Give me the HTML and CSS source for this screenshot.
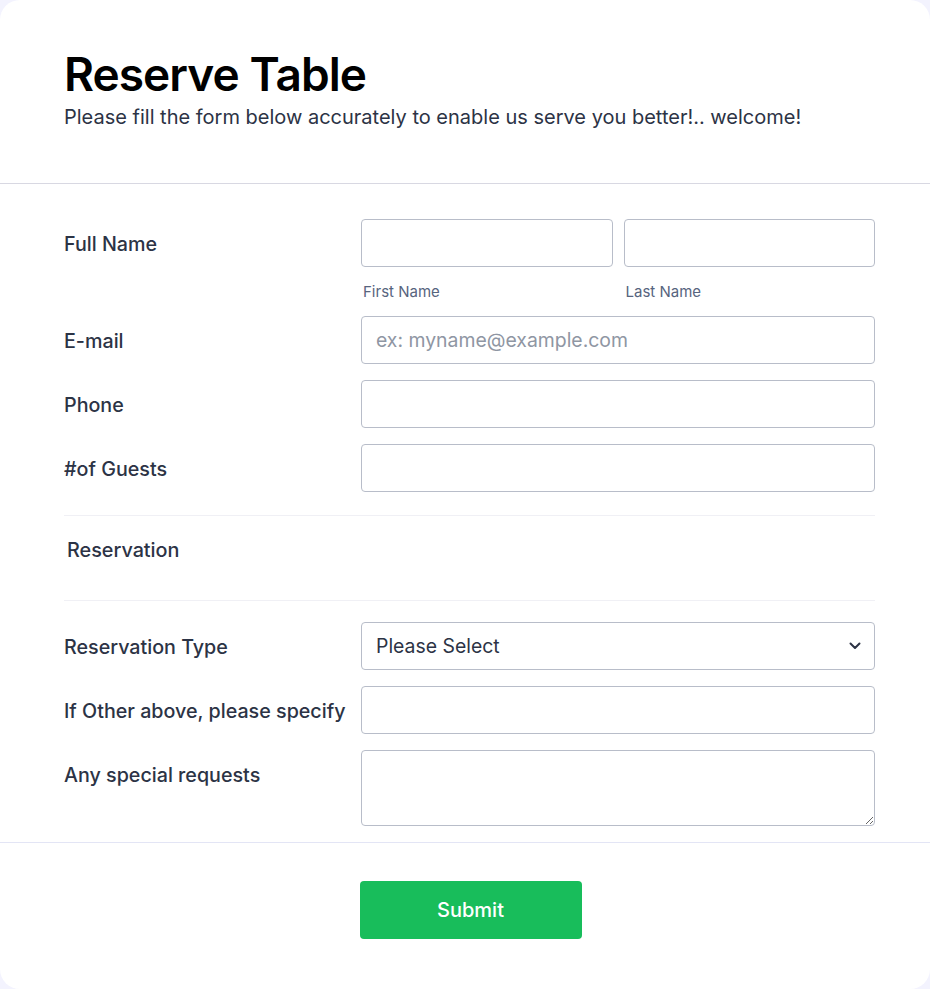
FILE: index.html
```html
<!DOCTYPE html>
<html lang="en">
<head>
<meta charset="utf-8">
<title>Reserve Table</title>
<link rel="stylesheet" href="styles.css">
</head>
<body>
<main class="card">
  <header class="header">
    <h1 class="title">Reserve Table</h1>
    <p class="subtitle">Please fill the form below accurately to enable us serve you better!.. welcome!</p>
  </header>
  <form class="form">
    <div class="row">
      <label class="label">Full Name</label>
      <div class="field">
        <div class="pair">
          <div class="sub">
            <input class="input" type="text">
            <span class="sublabel">First Name</span>
          </div>
          <div class="sub">
            <input class="input" type="text">
            <span class="sublabel">Last Name</span>
          </div>
        </div>
      </div>
    </div>
    <div class="row">
      <label class="label">E-mail</label>
      <div class="field"><input class="input" type="text" placeholder="ex: myname@example.com"></div>
    </div>
    <div class="row">
      <label class="label">Phone</label>
      <div class="field"><input class="input" type="text"></div>
    </div>
    <div class="row">
      <label class="label">#of Guests</label>
      <div class="field"><input class="input" type="text"></div>
    </div>
    <div class="section">
      <h2 class="section-title">Reservation</h2>
    </div>
    <div class="row">
      <label class="label">Reservation Type</label>
      <div class="field">
        <div class="select">
          <span class="select-text">Please Select</span>
          <svg class="chevron" width="12" height="8" viewBox="0 0 12 8"><path d="M1.5 1.5 L6 6 L10.5 1.5" fill="none" stroke="#2c3345" stroke-width="2" stroke-linecap="round" stroke-linejoin="round"/></svg>
        </div>
      </div>
    </div>
    <div class="row">
      <label class="label">If Other above, please specify</label>
      <div class="field"><input class="input" type="text"></div>
    </div>
    <div class="row">
      <label class="label">Any special requests</label>
      <div class="field"><textarea class="textarea"></textarea></div>
    </div>
  </form>
  <footer class="footer">
    <button class="submit" type="button">Submit</button>
  </footer>
</main>
</body>
</html>
```

FILE: styles.css
```css
* { box-sizing: border-box; }
html, body { margin: 0; padding: 0; }
body {
  background: #f3f3fe;
  font-family: Inter, "Noto Sans", sans-serif;
  color: #2c3345;
}
.card {
  background: #fff;
  border-radius: 20px;
  min-height: 989px;
  width: 930px;
}
.header {
  padding: 47px 64px 51px 64px;
  border-bottom: 1px solid #d8d8e2;
}
.title {
  margin: 0;
  font-size: 46px;
  line-height: 55px;
  font-weight: 600;
  letter-spacing: -0.95px;
  color: #000;
}
.subtitle {
  margin: 1px 0 0 0;
  font-size: 20px;
  line-height: 29px;
  color: #2c3345;
}
.form {
  padding: 35px 55px 16px 64px;
  display: flex;
  flex-direction: column;
  gap: 16px;
}
.row {
  display: grid;
  grid-template-columns: 297px 1fr;
}
.label {
  padding-top: 13px;
  font-size: 19.7px;
  line-height: 24px;
  font-weight: 500;
  color: #2c3345;
}
.pair {
  display: grid;
  grid-template-columns: 1fr 1fr;
  gap: 11px;
}
.sub { display: flex; flex-direction: column; }
.sublabel {
  padding: 16px 0 0 2px;
  font-size: 15px;
  line-height: 17px;
  color: #57647e;
}
.input, .select, .textarea {
  display: block;
  width: 100%;
  height: 48px;
  border: 1px solid #b8bdc9;
  border-radius: 4px;
  background: #fff;
  font-family: inherit;
  font-size: 19.4px;
  color: #2c3345;
  padding: 0 14px;
  outline: none;
}
.input::placeholder { color: #8f96a3; }
.select {
  display: flex;
  align-items: center;
  justify-content: space-between;
  padding: 0 13px 0 14px;
}
.textarea {
  height: 76px;
  padding: 10px 14px;
  resize: vertical;
}
.section {
  margin-top: 7px;
  border-top: 1px solid #f0f0f5;
  border-bottom: 1px solid #f0f0f5;
  height: 86px;
  padding: 22px 0 0 3px;
  margin-bottom: 5px;
}
.section-title {
  margin: 0;
  font-size: 19.8px;
  line-height: 24px;
  font-weight: 500;
  color: #2c3345;
}
.footer {
  border-top: 1px solid #e3e5f5;
  padding: 38px 0 50px 0;
  display: flex;
  justify-content: center;
}
.submit {
  width: 222px;
  height: 58px;
  margin-left: 11px;
  border: none;
  border-radius: 4px;
  background: #18bd5b;
  color: #fff;
  font-family: inherit;
  font-size: 20px;
  font-weight: 500;
}
```
